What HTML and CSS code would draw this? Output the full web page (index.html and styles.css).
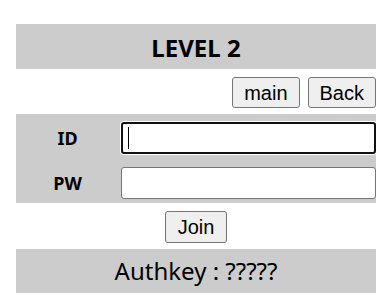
FILE: index.html
```html
<!DOCTYPE html>
<html>
<head>
<meta charset="utf-8">
<link rel="stylesheet" href="styles.css">
</head>
<body>
<div class="page">
  <div class="title">LEVEL 2</div>
  <div class="nav">
    <button class="btn">main</button>
    <button class="btn">Back</button>
  </div>
  <form class="form">
    <label class="lbl" for="id">ID</label>
    <div class="field-wrap">
      <input class="field focus" id="id" type="text">
      <span class="caret"></span>
    </div>
    <label class="lbl" for="pw">PW</label>
    <div class="field-wrap">
      <input class="field" id="pw" type="password">
    </div>
  </form>
  <div class="join-row">
    <button class="btn join">Join</button>
  </div>
  <div class="auth">Authkey : ?????</div>
</div>
</body>
</html>
```
FILE: styles.css
```css
html, body {
  margin: 0;
  padding: 0;
  background: #fff;
}
.page {
  padding: 24px 12px 0 16px;
  width: 360px;
  font-family: "Noto Sans", "Open Sans", sans-serif;
  color: #000;
}
.title {
  background: #cccccc;
  height: 45px;
  line-height: 47px;
  text-align: center;
  font-weight: bold;
  font-size: 24px;
}
.nav {
  display: flex;
  justify-content: flex-end;
  gap: 8px;
  margin-top: 8px;
}
.btn {
  font-family: "Liberation Sans", Arial, sans-serif;
  font-size: 20px;
  height: 31px;
  padding: 0 11px;
  border: 1px solid #767676;
  border-radius: 3px;
  background: #efefef;
  color: #000;
  line-height: 1;
}
.form {
  margin: 6px 0 0;
  background: #cccccc;
  display: grid;
  grid-template-columns: 105px 1fr;
  row-gap: 13px;
  padding: 8px 0 4px;
  align-items: center;
}
.lbl {
  text-align: center;
  font-weight: bold;
  font-size: 18px;
  padding-right: 2px;
}
.field-wrap {
  position: relative;
  height: 32px;
}
.field {
  box-sizing: border-box;
  width: 255px;
  height: 32px;
  border: 1px solid #767676;
  border-radius: 3px;
  background: #fff;
  margin: 0;
  font-size: 18px;
  padding: 0 6px;
  display: block;
}
.field.focus {
  outline: none;
  border: 2px solid #101010;
  box-shadow: 0 0 0 1px #ffffff;
}
.caret {
  position: absolute;
  left: 7px;
  top: 5px;
  width: 1px;
  height: 22px;
  background: #000;
}
.join-row {
  display: flex;
  justify-content: center;
  margin-top: 8px;
}
.join {
  padding: 0 12px;
  height: 32px;
}
.auth {
  margin-top: 6px;
  background: #cccccc;
  height: 44px;
  line-height: 44px;
  text-align: center;
  font-size: 24px;
}
```
